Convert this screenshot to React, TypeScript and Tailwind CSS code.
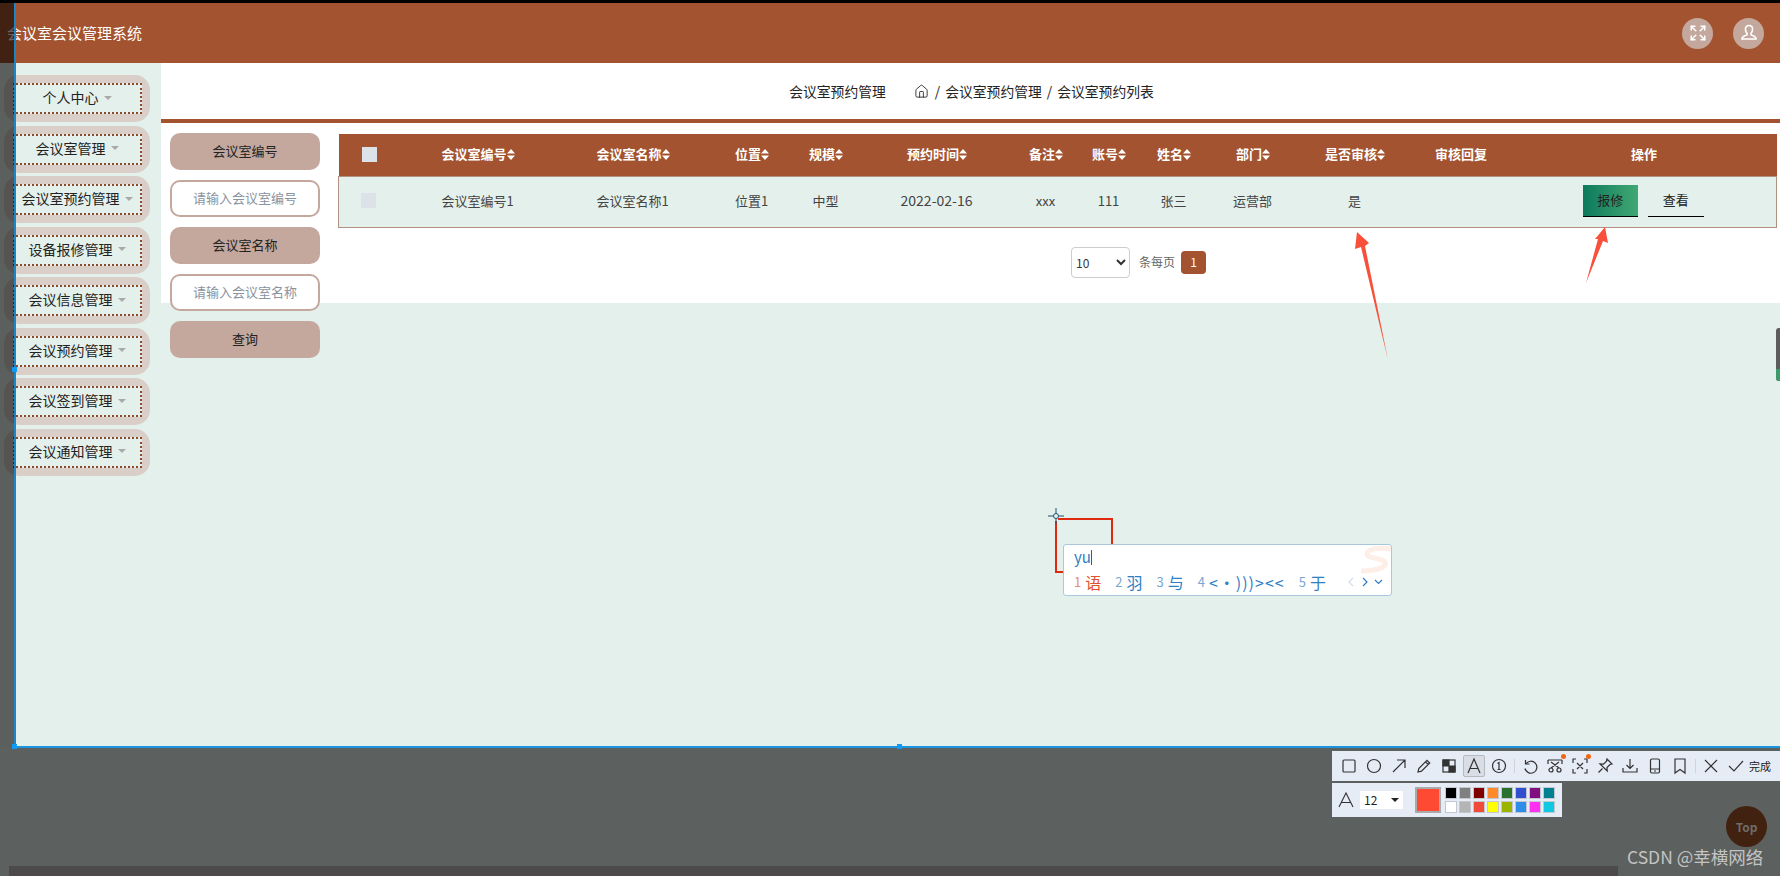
import { Expand, House } from "lucide-react";

const menuItems = [
  "个人中心",
  "会议室管理",
  "会议室预约管理",
  "设备报修管理",
  "会议信息管理",
  "会议预约管理",
  "会议签到管理",
  "会议通知管理",
];

const topSwatches = ["bg-[#000000]", "bg-[#808080]", "bg-[#800000]", "bg-[#ff8a2a]", "bg-[#2a702f]", "bg-[#3050d0]", "bg-[#800f80]", "bg-[#008090]"];
const bottomSwatches = ["bg-[#ffffff]", "bg-[#b5b5b5]", "bg-[#f04a38]", "bg-[#ffff00]", "bg-[#9ab400]", "bg-[#2d8de8]", "bg-[#ff30f0]", "bg-[#10c8e0]"];

const SortIcon = () => (
  <svg className="inline-block w-[8px] h-[11px] align-[-1px]" viewBox="0 0 8 11" fill="currentColor">
    <path d="M4 0 8 4.500H0Z" />
    <path d="M4 11 0 6.500h8Z" />
  </svg>
);

const HeadCell = ({ title, width, sort = true }: { title: string; width: string; sort?: boolean }) => (
  <th className={`${width} pb-[2px] pr-[1px] font-bold text-[13px] text-white text-center`}>
    {title}
    {sort && <SortIcon />}
  </th>
);

const SearchButton = ({ children }: { children: string }) => (
  <button type="button" className="h-[37px] shrink-0 pb-[2px] rounded-[10px] bg-[#c4a89e] text-[13px] text-[#222]">
    {children}
  </button>
);

const SearchInput = ({ placeholder }: { placeholder: string }) => (
  <input
    placeholder={placeholder}
    className="h-[37px] w-full shrink-0 pb-[2px] rounded-[10px] border-2 border-[#c4a89e] bg-white text-center text-[13px] outline-none placeholder:text-[#8a93a0]"
  />
);

const ToolIcon = ({ children, active = false, dot = false }: { children: React.ReactNode; active?: boolean; dot?: boolean }) => (
  <div className={`relative w-[22px] h-[22px] shrink-0 flex items-center justify-center rounded-[2px] ${active ? "bg-[#d8dde6] border border-[#b5b9c0]" : ""}`}>
    <svg className="w-[18px] h-[18px] text-[#333]" viewBox="0 0 18 18" fill="none" stroke="currentColor" strokeWidth="1.2">
      {children}
    </svg>
    {dot && <span className="absolute -top-[1px] right-0 w-[5px] h-[5px] rounded-full bg-[#f5640f]" />}
  </div>
);

const Candidate = ({ num, text, className = "text-[#2f7fc4]", numClass = "text-[#7aa6d4]" }: { num: string; text: string; className?: string; numClass?: string }) => (
  <span className={`flex items-center gap-[4px] ${className}`}>
    <span className={`text-[13px] ${numClass}`}>{num}</span>
    <span className="text-[16px] leading-none">{text}</span>
  </span>
);

export default function App() {
  return (
    <div className="relative w-[1780px] h-[876px] overflow-hidden flex flex-col bg-[#5c605e] font-['Noto_Sans_CJK_SC','Noto_Sans',sans-serif]">
      <div className="h-[3px] shrink-0 bg-black" />
      <header className="h-[60px] shrink-0 bg-[#a3532f] flex items-center justify-between pl-[7px] pr-[16px]">
        <span className="text-[15px] text-white">会议室会议管理系统</span>
        <div className="flex items-center gap-[20px]">
          <div className="w-[31px] h-[31px] rounded-full bg-[#c4a89e] flex items-center justify-center text-white">
            <Expand size={18} strokeWidth={2} />
          </div>
          <div className="w-[31px] h-[31px] rounded-full bg-[#c4a89e] flex items-center justify-center text-white">
            <svg className="w-[20px] h-[20px]" viewBox="0 0 20 20" fill="none" stroke="currentColor" strokeWidth="1.6">
              <path d="M10 2.500c2.200 0 3.600 1.700 3.600 3.800 0 1.600-.7 3-1.600 3.900v1.600c1.600.6 5 1.700 5 3.700v.5H3v-.5c0-2 3.400-3.100 5-3.700v-1.600c-.9-.9-1.600-2.300-1.600-3.900 0-2.100 1.400-3.800 3.600-3.800Z" />
            </svg>
          </div>
        </div>
      </header>

      <div className="h-[683px] shrink-0 flex bg-[#e4f0eb]">
        <aside className="w-[161px] shrink-0 flex flex-col gap-[3.5px] pt-[12px] pl-[4px]">
          {menuItems.map((item) => (
            <div key={item} className="w-[146px] h-[47px] rounded-[15px] bg-[#d9cfc8] flex items-center justify-center">
              <div className="w-[129px] h-[31px] pb-[2px] border-2 border-dotted border-[#8b4a2b] bg-[#e4f0eb] flex items-center justify-center gap-[5px] text-[14px] text-[#222]">
                {item}
                <span className="w-0 h-0 border-x-[4px] border-x-transparent border-t-[4px] border-t-[#a9a9a9]" />
              </div>
            </div>
          ))}
        </aside>

        <main className="flex-1 min-w-0">
          <div className="h-[60px] pl-[2px] pt-[1px] bg-white border-b-4 border-[#a3532f] flex items-center justify-center text-[13.8px] text-[#222]">
            <span className="mr-[28px]">会议室预约管理</span>
            <House size={15} strokeWidth={1.4} className="mr-[6px]" />
            <span>/</span>
            <span className="ml-[5px]">会议室预约管理</span>
            <span className="ml-[5px]">/</span>
            <span className="ml-[5px]">会议室预约列表</span>
          </div>

          <div className="h-[180px] bg-white flex pl-[9px]">
            <div className="w-[150px] shrink-0 flex flex-col gap-[10px] pt-[10px]">
              <SearchButton>会议室编号</SearchButton>
              <SearchInput placeholder="请输入会议室编号" />
              <SearchButton>会议室名称</SearchButton>
              <SearchInput placeholder="请输入会议室名称" />
              <SearchButton>查询</SearchButton>
            </div>

            <div className="ml-[18px] flex-1 min-w-0 pt-[11px]">
              <table className="w-[1438px] table-fixed border-collapse">
                <thead>
                  <tr className="h-[42px] bg-[#a3532f]">
                    <th className="w-[62px]">
                      <div className="mx-auto w-[15px] h-[15px] bg-[#dde1e8]" />
                    </th>
                    <HeadCell title="会议室编号" width="w-[156px]" />
                    <HeadCell title="会议室名称" width="w-[154px]" />
                    <HeadCell title="位置" width="w-[84px]" />
                    <HeadCell title="规模" width="w-[64px]" />
                    <HeadCell title="预约时间" width="w-[158px]" />
                    <HeadCell title="备注" width="w-[60px]" />
                    <HeadCell title="账号" width="w-[66px]" />
                    <HeadCell title="姓名" width="w-[64px]" />
                    <HeadCell title="部门" width="w-[94px]" />
                    <HeadCell title="是否审核" width="w-[110px]" />
                    <HeadCell title="审核回复" width="w-[102px]" sort={false} />
                    <HeadCell title="操作" width="w-[264px]" sort={false} />
                  </tr>
                </thead>
                <tbody>
                  <tr className="h-[51px] bg-[#e4f0eb] border border-[#b09080] text-[13px] text-[#444] text-center [&>td]:pb-[2px] [&>td]:pr-[2px]">
                    <td>
                      <div className="mx-auto w-[15px] h-[15px] bg-[#dde1e8]" />
                    </td>
                    <td>会议室编号1</td>
                    <td>会议室名称1</td>
                    <td>位置1</td>
                    <td>中型</td>
                    <td className="text-[14px]">2022-02-16</td>
                    <td>xxx</td>
                    <td>111</td>
                    <td>张三</td>
                    <td>运营部</td>
                    <td>是</td>
                    <td />
                    <td>
                      <div className="flex justify-center gap-[10px] text-[#222]">
                        <button type="button" className="w-[55px] h-[32px] border-b border-black bg-gradient-to-r from-[#0a7a5c] to-[#3fa873]">
                          报修
                        </button>
                        <button type="button" className="w-[56px] h-[32px] border-b border-black">
                          查看
                        </button>
                      </div>
                    </td>
                  </tr>
                </tbody>
              </table>

              <div className="mt-[19px] ml-[733px] flex items-center text-[12px] text-[#666]">
                <select className="w-[59px] h-[31px] rounded-[4px] border border-[#ccc] bg-white text-[12px] text-[#333]">
                  <option>10</option>
                </select>
                <span className="ml-[9px]">条每页</span>
                <span className="ml-[6px] w-[25px] h-[23px] rounded-[4px] bg-[#a3532f] text-white flex items-center justify-center">1</span>
              </div>
            </div>
          </div>
        </main>
      </div>

      {/* Top button and page scrollbar, under the capture dimming */}
      <div className="absolute left-[1726px] top-[806px] w-[41px] h-[41px] rounded-full bg-[#41210f] flex items-center justify-center text-[12px] font-bold text-[#6c6c68]">
        Top
      </div>
      <div className="absolute left-0 right-0 bottom-0 h-[10px] pl-[9px] pr-[162px]">
        <div className="h-full bg-[#4c4a4a]" />
      </div>
      <div className="absolute right-0 top-[328px] w-[4px] h-[53px] rounded-l-[3px] bg-[#5c5c5c] overflow-hidden flex flex-col justify-end">
        <div className="h-[12px] bg-[#3f9a6a]" />
      </div>

      {/* Capture selection: dimmed strip and blue frame */}
      <div className="absolute left-0 top-[3px] w-[14px] h-[743px] bg-black/60" />
      <div className="absolute left-[14px] top-[3px] w-[2px] h-[744px] bg-[#1a86c8]" />
      <div className="absolute left-[14px] top-[746px] right-0 h-[2px] bg-[#1a96e0]" />
      <div className="absolute left-[12px] top-[367px] w-[5px] h-[5px] bg-[#0f9bf5]" />
      <div className="absolute left-[12px] top-[744px] w-[5px] h-[5px] bg-[#0f9bf5]" />
      <div className="absolute left-[897px] top-[744px] w-[5px] h-[5px] bg-[#0f9bf5]" />

      {/* Annotations drawn on the capture */}
      <svg className="absolute left-0 top-0 w-[1780px] h-[876px] pointer-events-none" viewBox="0 0 1780 876">
        <polygon points="1357,232 1369,243 1365,246 1388,360 1361,247 1355,249" fill="#f9503b" />
        <polygon points="1605,227 1608,243 1603,241 1586,283 1598,239 1595,239" fill="#f9503b" />
        <path d="M1058 519H1112V546M1056 521V572H1064" fill="none" stroke="#e02a10" strokeWidth="2" />
        <g fill="none" stroke="#1f5273" strokeWidth="1">
          <circle cx="1056" cy="516" r="2.500" />
          <path d="M1048 516h5.500M1058.500 516h5.500M1056 508v5.500M1056 518.500v5.500" />
        </g>
      </svg>

      {/* Input method popup */}
      <div className="absolute left-[1063px] top-[544px] w-[329px] h-[52px] rounded-[3px] border border-[#a9c8e0] bg-white overflow-hidden">
        <svg className="absolute right-0 top-0 w-[38px] h-[32px]" viewBox="0 0 38 32" fill="none" stroke="#fdeee7" strokeWidth="5">
          <path d="M38 4C26 2 14 4 14 9c0 5 14 3 18 8 3 5-8 9-24 9" />
        </svg>
        <div className="relative pl-[10px] h-[24px] flex items-center text-[15px] text-[#2f7fc4]">
          yu<span className="w-px h-[15px] bg-[#555]" />
        </div>
        <div className="relative pl-[10px] h-[26px] flex items-center gap-[14px]">
          <Candidate num="1" text="语" className="text-[#e2502f]" numClass="text-[#ee8a70]" />
          <Candidate num="2" text="羽" />
          <Candidate num="3" text="与" />
          <span className="flex items-center gap-[4px] text-[#2f7fc4]">
            <span className="text-[13px] text-[#7aa6d4]">4</span>
            <span className="text-[16px] leading-none tracking-[1px]">{"<・)))><<"}</span>
          </span>
          <Candidate num="5" text="于" />
          <svg className="absolute left-[284px] top-[8px] w-[6px] h-[10px] text-[#d5dde6]" viewBox="0 0 6 10" fill="none" stroke="currentColor" strokeWidth="1.2">
            <path d="M5 1 1 5l4 4" />
          </svg>
          <svg className="absolute left-[298px] top-[8px] w-[6px] h-[10px] text-[#2f7fc4]" viewBox="0 0 6 10" fill="none" stroke="currentColor" strokeWidth="1.2">
            <path d="m1 1 4 4-4 4" />
          </svg>
          <svg className="absolute left-[310px] top-[10px] w-[9px] h-[6px] text-[#2f7fc4]" viewBox="0 0 9 6" fill="none" stroke="currentColor" strokeWidth="1.2">
            <path d="m1 1 3.500 3.500L8 1" />
          </svg>
        </div>
      </div>

      {/* Capture tool bars */}
      <div className="absolute left-[1332px] top-[751px] right-0 h-[30px] bg-[#e6ecf6] flex items-center pl-[6px] gap-[3px]">
        <ToolIcon><rect x="3" y="3" width="12" height="12" rx="1" /></ToolIcon>
        <ToolIcon><circle cx="9" cy="9" r="6.500" /></ToolIcon>
        <ToolIcon><path d="M3 15 15 3M7 3h8v8" /></ToolIcon>
        <ToolIcon><path d="m3 15 .8-3.500L12 3.300l2.700 2.700-8.200 8.200ZM10.500 4.800l2.700 2.700" /></ToolIcon>
        <ToolIcon>
          <rect x="3" y="3" width="12" height="12" />
          <path d="M3 3h6v6H3ZM9 9h6v6H9Z" fill="currentColor" />
        </ToolIcon>
        <ToolIcon active><path d="m3 16 6-14 6 14M5 11.500h8" /></ToolIcon>
        <ToolIcon>
          <circle cx="9" cy="9" r="6.500" />
          <path d="M7.500 6.500 9 5.500v7M7.500 12.500h3" />
        </ToolIcon>
        <span className="w-px h-[14px] bg-[#cfd4dc] mx-[1px]" />
        <ToolIcon><path d="M4.500 3v4h4M4.800 7A6 6 0 1 1 4 11.500" /></ToolIcon>
        <ToolIcon dot>
          <path d="M2 3h14M2 3v4M16 3v4M5 5l8 6M13 5l-8 6" />
          <circle cx="5" cy="13" r="2" />
          <circle cx="13" cy="13" r="2" />
        </ToolIcon>
        <ToolIcon dot>
          <path d="M2 6V2h3M13 2h3v4M2 12v4h3M13 16h3v-4M6 6l6 6M12 6l-6 6" />
        </ToolIcon>
        <ToolIcon><path d="m11 2 5 5-2 .5-3 3 .2 3.500L4 7l3.500.2 3-3ZM6.500 11.500 2.500 15.500" /></ToolIcon>
        <ToolIcon><path d="M9 2v9M5.500 8 9 11.500 12.500 8M2 11v4h14v-4" /></ToolIcon>
        <ToolIcon>
          <rect x="4.500" y="2" width="9" height="14" rx="1.500" />
          <path d="M4.500 12h9M8 14h2" />
        </ToolIcon>
        <ToolIcon><path d="M4 2h10v14l-5-3.500L4 16Z" /></ToolIcon>
        <span className="w-px h-[14px] bg-[#cfd4dc] mx-[1px]" />
        <ToolIcon><path d="m3 3 12 12M15 3 3 15" /></ToolIcon>
        <ToolIcon><path d="m2 9 5 5L16 4" /></ToolIcon>
        <span className="-ml-[1px] text-[11px] text-[#222] whitespace-nowrap">完成</span>
      </div>

      <div className="absolute left-[1332px] top-[783px] w-[230px] h-[34px] bg-[#e6ecf6] flex items-center pl-[6px]">
        <svg className="w-[16px] h-[16px] text-[#333]" viewBox="0 0 16 16" fill="none" stroke="currentColor" strokeWidth="1.1">
          <path d="m1 15 7-14 7 14M3.500 10.500h9" />
        </svg>
        <div className="ml-[6px] w-[43px] h-[18px] bg-white flex items-center justify-between px-[4px] text-[12px] text-[#222]">
          12
          <span className="w-0 h-0 border-x-[4px] border-x-transparent border-t-[4px] border-t-[#222]" />
        </div>
        <div className="ml-[12px] w-[26px] h-[26px] border-2 border-[#aaa] bg-[#ff4a33]" />
        <div className="ml-[4px] flex flex-col gap-[2px]">
          {[topSwatches, bottomSwatches].map((row, i) => (
            <div key={i} className="flex gap-[2px]">
              {row.map((color) => (
                <span key={color} className={`w-[12px] h-[12px] border border-[#c4c8ce] ${color}`} />
              ))}
            </div>
          ))}
        </div>
      </div>

      <span className="absolute left-[1627px] top-[845px] text-[17.5px] leading-[24px] text-[#c4c4c4] whitespace-nowrap">CSDN @幸横网络</span>
    </div>
  );
}
